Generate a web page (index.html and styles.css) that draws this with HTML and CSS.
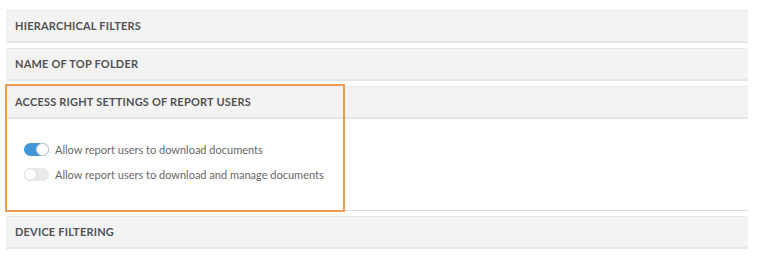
FILE: index.html
```html
<!DOCTYPE html>
<html lang="en">
<head>
    <meta charset="UTF-8">
    <title>Report Settings</title>
    <link rel="stylesheet" href="styles.css">
</head>
<body>

    <div class="settings">
        <div class="section">
            <div class="section-header">Hierarchical filters</div>
        </div>
        <div class="section">
            <div class="section-header">Name of top folder</div>
        </div>
        <div class="section open highlighted">
            <div class="section-header">Access right settings of report users</div>
            <div class="section-body">
                <label class="option">
                    <span class="switch on"><span class="knob"></span></span>
                    Allow report users to download documents
                </label>
                <label class="option">
                    <span class="switch"><span class="knob"></span></span>
                    Allow report users to download and manage documents
                </label>
            </div>
            <div class="callout"></div>
        </div>
        <div class="section">
            <div class="section-header">Device filtering</div>
        </div>
    </div>

</body>
</html>
```

FILE: styles.css
```css
body {
    margin: 0;
    font-family: Lato, "Open Sans", sans-serif;
    background-color: #fff;
}
.settings {
    width: 742px;
    padding: 10px 0 0 6px;
}
.section {
    position: relative;
    margin-bottom: 5px;
}
.section-header {
    height: 30px;
    line-height: 30px;
    padding-left: 9px;
    background-color: #f3f3f3;
    border-top: 1px solid #e9e9e9;
    border-bottom: 2px solid #e6e6e6;
    font-size: 11px;
    font-weight: bold;
    letter-spacing: 0.2px;
    text-transform: uppercase;
    color: #525252;
}
.section-body {
    height: 92px;
    padding-left: 18px;
    border-bottom: 1px solid #dcdcdc;
    box-sizing: border-box;
    padding-top: 24px;
}
.option {
    display: flex;
    align-items: center;
    gap: 6px;
    height: 13px;
    margin-bottom: 12px;
    font-size: 11px;
    color: #686868;
}
.switch {
    position: relative;
    width: 25px;
    height: 13px;
    border-radius: 7px;
    background-color: #e9e9e9;
    box-sizing: border-box;
}
.switch.on {
    background-color: #3f97d8;
}
.knob {
    position: absolute;
    top: 0;
    left: 0;
    width: 13px;
    height: 13px;
    border-radius: 50%;
    background-color: #fff;
    border: 1px solid #dcdcdc;
    box-sizing: border-box;
}
.switch.on .knob {
    left: 12px;
    border-color: #cfcfcf;
}
.callout {
    position: absolute;
    top: -2px;
    left: -1px;
    width: 340px;
    height: 128px;
    border: 2px solid #ee9b50;
    box-sizing: border-box;
    pointer-events: none;
}
```
